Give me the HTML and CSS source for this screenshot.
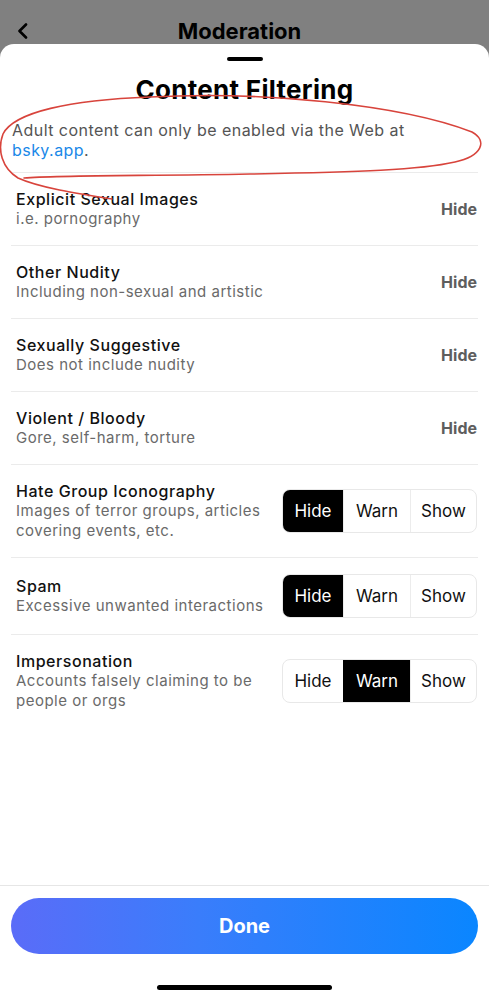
FILE: index.html
```html
<!DOCTYPE html>
<html lang="en">
<head>
<meta charset="utf-8">
<title>Content Filtering</title>
<link rel="stylesheet" href="styles.css">
</head>
<body>
<div class="page">
  <header class="topbar">
    <svg class="back" width="12" height="16" viewBox="0 0 12 16"><path d="M9 1.5 L2.5 8 L9 14.5" fill="none" stroke="#000" stroke-width="2.6" stroke-linecap="round" stroke-linejoin="round"/></svg>
    <div class="topbar-title">Moderation</div>
  </header>
  <section class="sheet">
    <div class="handle"></div>
    <h1 class="sheet-title">Content Filtering</h1>
    <p class="desc">Adult content can only be enabled via the Web at <a class="link">bsky.app</a>.</p>
    <div class="list">
      <div class="row">
        <div class="row-text"><div class="row-title">Explicit Sexual Images</div><div class="row-sub">i.e. pornography</div></div>
        <div class="fixed">Hide</div>
      </div>
      <div class="row">
        <div class="row-text"><div class="row-title">Other Nudity</div><div class="row-sub">Including non-sexual and artistic</div></div>
        <div class="fixed">Hide</div>
      </div>
      <div class="row">
        <div class="row-text"><div class="row-title">Sexually Suggestive</div><div class="row-sub">Does not include nudity</div></div>
        <div class="fixed">Hide</div>
      </div>
      <div class="row">
        <div class="row-text"><div class="row-title">Violent / Bloody</div><div class="row-sub">Gore, self-harm, torture</div></div>
        <div class="fixed">Hide</div>
      </div>
      <div class="row">
        <div class="row-text narrow"><div class="row-title">Hate Group Iconography</div><div class="row-sub">Images of terror groups, articles covering events, etc.</div></div>
        <div class="seg"><div class="seg-item s-hide on">Hide</div><div class="seg-item s-warn">Warn</div><div class="seg-item s-show">Show</div></div>
      </div>
      <div class="row">
        <div class="row-text narrow"><div class="row-title">Spam</div><div class="row-sub">Excessive unwanted interactions</div></div>
        <div class="seg"><div class="seg-item s-hide on">Hide</div><div class="seg-item s-warn">Warn</div><div class="seg-item s-show">Show</div></div>
      </div>
      <div class="row">
        <div class="row-text narrow"><div class="row-title">Impersonation</div><div class="row-sub">Accounts falsely claiming to be people or orgs</div></div>
        <div class="seg"><div class="seg-item s-hide">Hide</div><div class="seg-item s-warn on">Warn</div><div class="seg-item s-show">Show</div></div>
      </div>
    </div>
    <footer class="footer">
      <button class="done">Done</button>
      <div class="home"></div>
    </footer>
  </section>
  <svg class="scribble" width="489" height="220" viewBox="0 0 489 220">
    <path d="M112 199 C 80 194, 40 188, 18 178 C 2 168, -3 150, 3 134 C 14 112, 70 100, 150 97 C 260 91, 400 104, 472 132 C 488 141, 482 156, 455 162 C 420 170, 360 172, 250 174 C 150 176, 60 175, 24 178" fill="none" stroke="#d8443c" stroke-width="1.6" stroke-linecap="round"/>
  </svg>
</div>
</body>
</html>
```

FILE: styles.css
```css
* { box-sizing: border-box; }
html, body { margin: 0; padding: 0; }
body {
  background: #808080;
  font-family: Inter, "Liberation Sans", Arial, sans-serif;
  color: #000;
}
.page {
  position: relative;
  width: 489px;
  height: 1000px;
  overflow: hidden;
}
.topbar {
  height: 44px;
  display: flex;
  align-items: center;
  justify-content: center;
  position: relative;
  padding-right: 10px;
}
.back {
  position: absolute;
  left: 17px;
  top: 23px;
}
.topbar-title {
  font-size: 22px;
  font-weight: 700;
  margin-top: 18px;
}
.sheet {
  background: #fff;
  border-radius: 14px 14px 0 0;
  height: 956px;
  display: flex;
  flex-direction: column;
}
.handle {
  width: 36px;
  height: 4px;
  border-radius: 2px;
  background: #000;
  margin: 13px auto 0;
}
.sheet-title {
  margin: 13px 0 0;
  text-align: center;
  font-size: 26px;
  line-height: 32px;
  font-weight: 700;
  letter-spacing: 0.3px;
}
.desc {
  margin: 14px 0 0;
  padding: 0 24px 0 12px;
  font-size: 16px;
  line-height: 20px;
  color: #545454;
  letter-spacing: 0.45px;
}
.link { color: #1a88e8; }
.list {
  flex: 1;
  margin: 12px 11px 0;
}
.row {
  display: flex;
  align-items: center;
  justify-content: space-between;
  border-top: 1px solid #ebebeb;
  padding: 16px 1px 16px 5px;
}
.row-text { display: flex; flex-direction: column; }
.row-text.narrow { width: 258px; }
.row-title {
  font-size: 16px;
  line-height: 20px;
  font-weight: 500;
  color: #111;
  letter-spacing: 0.55px;
}
.row-sub {
  font-size: 15px;
  line-height: 20px;
  color: #6a6a6a;
  letter-spacing: 0.5px;
}
.fixed {
  font-size: 16px;
  font-weight: 700;
  color: #5e5e5e;
}
.seg {
  display: flex;
  height: 44px;
  border: 1px solid #e8e8e8;
  border-radius: 8px;
  overflow: hidden;
}
.seg-item {
  display: flex;
  align-items: center;
  justify-content: center;
  font-size: 17px;
  color: #111;
  border-left: 1px solid #ececec;
}
.seg-item:first-child { border-left: none; }
.s-hide { width: 60px; }
.s-warn { width: 67px; }
.s-show { width: 66px; }
.seg-item.on { background: #000; color: #fff; border-left-color: #000; }
.footer {
  border-top: 1px solid #e6e6e6;
  padding: 12px 11px 0;
  display: flex;
  flex-direction: column;
  align-items: center;
}
.done {
  width: 100%;
  height: 56px;
  border: none;
  border-radius: 28px;
  background: linear-gradient(90deg, #5a6cf8 0%, #3a7dfb 40%, #0a86ff 100%);
  color: #fff;
  font-family: inherit;
  font-size: 20px;
  font-weight: 700;
}
.home {
  width: 175px;
  height: 5px;
  border-radius: 3px;
  background: #000;
  margin: 31px 0 10px;
}
.scribble {
  position: absolute;
  left: 0;
  top: 0;
  pointer-events: none;
}
```
